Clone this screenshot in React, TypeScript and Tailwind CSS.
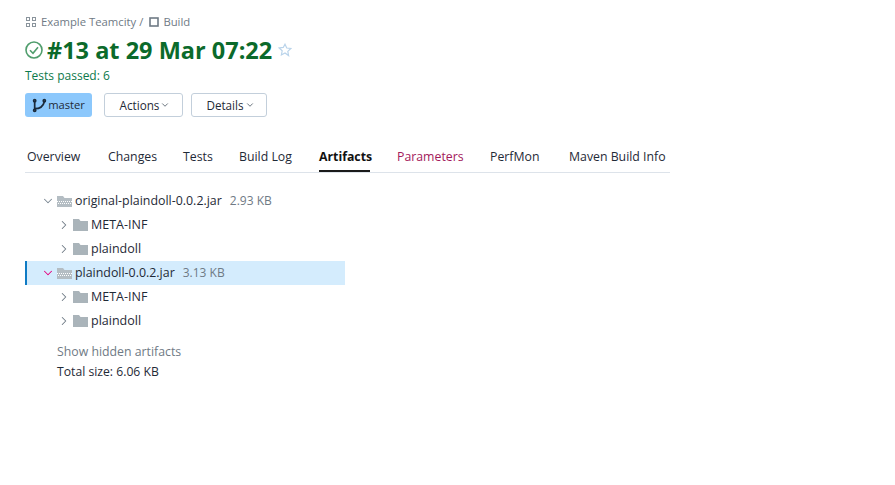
import React from 'react';
import { ChevronDown, ChevronRight } from 'lucide-react';

const tabs = [
  { label: 'Overview', className: 'w-[54px] pt-[2px] text-[#1f2a37]' },
  { label: 'Changes', className: 'w-[48px] pt-[2px] text-[#1f2a37]' },
  { label: 'Tests', className: 'w-[29px] pt-[2px] text-[#1f2a37]' },
  { label: 'Build Log', className: 'w-[53px] pt-[2px] text-[#1f2a37]' },
  { label: 'Artifacts', className: 'w-[51px] pt-[4px] text-[#111] font-bold border-b-2 border-[#1a1a1a]' },
  { label: 'Parameters', className: 'w-[66px] pt-[2px] text-[#a3195b]' },
  { label: 'PerfMon', className: 'w-[52px] pt-[2px] text-[#1f2a37]' },
  { label: 'Maven Build Info', className: 'w-[97px] pt-[2px] text-[#1f2a37]' },
];

const FolderIcon = () => (
  <svg width="15" height="12" viewBox="0 0 15 12" className="block shrink-0">
    <path d="M0 0h6l1.5 2H15v10H0z" fill="#aab4ba" />
  </svg>
);

const JarIcon = () => (
  <svg width="15" height="11" viewBox="0 0 15 11" className="block shrink-0">
    <path d="M0 0h6l1.5 2H15v9H0z" fill="#b4bdc3" />
    <path d="M0 5.5h15" stroke="#fff" strokeWidth="1" strokeDasharray="1 1" />
    <path d="M1 7.5h14" stroke="#fff" strokeWidth="1" strokeDasharray="1 1" />
  </svg>
);

const FolderRow = ({ name }: { name: string }) => (
  <div className="flex h-6 items-center pl-[32px] text-[#1f2a37]">
    <ChevronRight className="h-[14px] w-[14px] text-[#6f7a85]" strokeWidth={1.75} />
    <span className="ml-[2px]"><FolderIcon /></span>
    <span className="ml-[3px]">{name}</span>
  </div>
);

const JarRow = ({ name, size, selected }: { name: string; size: string; selected?: boolean }) => (
  <div className={`flex h-6 w-[320px] items-center border-l-2 pl-[14px] ${selected ? 'border-[#0f7bc4] bg-[#d4ecfd]' : 'border-transparent'}`}>
    <ChevronDown className={`h-[14px] w-[14px] ${selected ? 'text-[#e5007e]' : 'text-[#7a8792]'}`} strokeWidth={1.75} />
    <span className="ml-[2px]"><JarIcon /></span>
    <span className="ml-[3px] text-[12.4px] text-[#1f2a37]">{name}</span>
    <span className="ml-[8px] text-[12px] text-[#6f7a85]">{size}</span>
  </div>
);

export default function App() {
  return (
    <div className="h-[485px] w-[895px] overflow-hidden bg-white pl-[25px] pt-[13px] text-[12.5px] leading-[18px] font-['Open_Sans','Noto_Sans',sans-serif]">
      <div className="flex h-[18px] items-center pl-[1px] text-[11.3px] text-[#6f7a85]">
        <svg width="10" height="10" viewBox="0 0 10 10" fill="none" stroke="#8a949c" strokeWidth="1">
          <rect x="0.5" y="0.5" width="3" height="3" />
          <rect x="6.5" y="0.5" width="3" height="3" />
          <rect x="0.5" y="6.5" width="3" height="3" />
          <rect x="6.5" y="6.5" width="3" height="3" />
        </svg>
        <span className="ml-[5px]">Example Teamcity</span>
        <span className="ml-[3px]">/</span>
        <svg width="10" height="10" viewBox="0 0 10 10" fill="none" stroke="#6f7a85" strokeWidth="1.6" className="ml-[6px]">
          <rect x="1" y="1" width="8" height="8" />
        </svg>
        <span className="ml-[4px]">Build</span>
      </div>

      <div className="mt-[3px] flex h-8 items-center">
        <svg width="18" height="18" viewBox="0 0 18 18" fill="none" stroke="#4f9d6c" strokeWidth="1.6">
          <circle cx="9" cy="9" r="8" />
          <path d="M5 9.2l3 3 5-6" />
        </svg>
        <span className="ml-[4px] whitespace-nowrap text-[23.5px] font-bold text-[#0b6a2b]">#13 at 29 Mar 07:22</span>
        <svg width="14" height="14" viewBox="0 0 24 24" fill="none" stroke="#b9d3ea" strokeWidth="2" className="ml-[6px]">
          <path d="M12 2l3 6.6 7 .9-5.2 4.8 1.4 7.2L12 17l-6.2 3.5 1.4-7.2L2 8.5l7-.9z" />
        </svg>
      </div>

      <div className="mt-[1px] text-[12px] text-[#0d7a4c]">Tests passed: 6</div>

      <div className="mt-[8px] flex items-center gap-2">
        <div className="flex h-6 w-[67px] items-center justify-center rounded-[3px] bg-[#8cc8fc] text-[11.2px] text-[#1f2a37]">
          <svg width="15" height="15" viewBox="0 0 14 14" fill="none" stroke="#1b2a3a" strokeWidth="1.6">
            <circle cx="2.5" cy="2.5" r="1" />
            <circle cx="2.5" cy="11.5" r="1" />
            <circle cx="11.5" cy="2.5" r="1" />
            <path d="M2.5 3.5v7M2.5 10c5 0 8-2 9-6.5" />
          </svg>
          <span className="ml-[1px]">master</span>
        </div>
        <div className="ml-1 flex h-6 w-[79px] items-center justify-center rounded-[3px] border border-[#c3cfdb] pl-[3px] text-[11.7px] text-[#1f2a37]">
          Actions
          <ChevronDown className="ml-[1px] h-[10px] w-[10px] text-[#4f5b66]" />
        </div>
        <div className="flex h-6 w-[76px] items-center justify-center rounded-[3px] border border-[#c3cfdb] pl-[3px] text-[11.7px] text-[#1f2a37]">
          Details
          <ChevronDown className="ml-[1px] h-[10px] w-[10px] text-[#4f5b66]" />
        </div>
      </div>

      <div className="mt-[23px] flex h-[33px] w-[645px] items-stretch gap-[27px] border-b border-[#dde3ea] pl-[2px] text-[12.3px]">
        {tabs.map((t) => (
          <div key={t.label} className={`flex items-center whitespace-nowrap ${t.className}`}>{t.label}</div>
        ))}
      </div>

      <div className="mt-[16px]">
        <JarRow name="original-plaindoll-0.0.2.jar" size="2.93 KB" />
        <FolderRow name="META-INF" />
        <FolderRow name="plaindoll" />
        <JarRow name="plaindoll-0.0.2.jar" size="3.13 KB" selected />
        <FolderRow name="META-INF" />
        <FolderRow name="plaindoll" />
      </div>

      <div className="mt-[10px] pl-[32px] text-[12.3px] text-[#6f7a85]">Show hidden artifacts</div>
      <div className="mt-[2px] pl-[32px] text-[12.2px] text-[#1f2a37]">Total size: 6.06 KB</div>
    </div>
  );
}
